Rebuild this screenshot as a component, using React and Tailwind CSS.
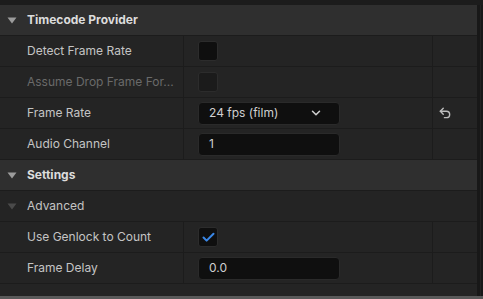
import { Undo2, ChevronDown, Check } from "lucide-react";

function Caret({ dim }) {
  return (
    <svg width="10" height="7" viewBox="0 0 10 7" className="shrink-0">
      <path d="M0.5 0.5 H9.5 L5 6.5 Z" fill={dim ? "#4a4a4a" : "#9c9c9c"} />
    </svg>
  );
}

function Header({ title }) {
  return (
    <div className="h-[31px] flex items-center gap-[10px] pl-[7px] bg-[#2f2f2f] border-b border-[#1c1c1c]">
      <Caret />
      <span className="font-bold text-[#dcdcdc]">{title}</span>
    </div>
  );
}

function Row({ label, dim, children, reset }) {
  return (
    <div className="h-[31px] flex bg-[#242424] border-b border-[#1c1c1c]">
      <div className={`w-[184px] shrink-0 flex items-center pl-[27px] border-r border-[#1c1c1c] ${dim ? "text-[#6a6a6a]" : "text-[#c4c4c4]"}`}>
        {label}
      </div>
      <div className="w-[249px] shrink-0 flex items-center pl-[14px] border-r border-[#1c1c1c]">
        {children}
      </div>
      <div className="flex-1 flex items-center pl-[5px]">
        {reset && <Undo2 size={14} strokeWidth={2.4} color="#bdbdbd" />}
      </div>
    </div>
  );
}

function Box({ dim, checked }) {
  return (
    <div className={`w-[20px] h-[20px] rounded-[3px] border border-[#2c2c2c] flex items-center justify-center ${dim ? "bg-[#1b1b1b]" : "bg-[#0f0f0f]"}`}>
      {checked && <Check size={15} strokeWidth={3.2} color="#3a87e6" />}
    </div>
  );
}

function Field({ value, dropdown }) {
  return (
    <div className="w-[142px] h-[23px] rounded-[4px] bg-[#0f0f0f] border border-[#2a2a2a] flex items-center pl-[10px] pr-[16px] justify-between text-[#d0d0d0]">
      <span>{value}</span>
      {dropdown && <ChevronDown size={14} strokeWidth={2.6} color="#cfcfcf" />}
    </div>
  );
}

export default function App() {
  return (
    <div className="w-[483px] h-[299px] bg-[#1a1a1a] overflow-hidden text-[12px] leading-none" style={{ fontFamily: "Inter, 'Noto Sans', sans-serif" }}>
      <div className="h-[5px] bg-[#1c1c1c]" />
      <div className="flex h-[291px]">
        <div className="w-[477px] flex flex-col">
          <Header title="Timecode Provider" />
          <Row label="Detect Frame Rate"><Box /></Row>
          <Row label="Assume Drop Frame For..." dim><Box dim /></Row>
          <Row label="Frame Rate" reset><Field value="24 fps (film)" dropdown /></Row>
          <Row label="Audio Channel"><Field value="1" /></Row>
          <Header title="Settings" />
          <div className="h-[31px] flex items-center gap-[10px] pl-[7px] bg-[#242424] border-b border-[#1c1c1c]">
            <Caret dim />
            <span className="text-[#c4c4c4]">Advanced</span>
          </div>
          <Row label="Use Genlock to Count"><Box checked /></Row>
          <Row label="Frame Delay"><Field value="0.0" /></Row>
          <div className="flex-1 bg-[#242424]" />
        </div>
        <div className="flex-1 bg-[#181818] flex justify-center">
          <div className="w-[1px] bg-[#222]" />
        </div>
      </div>
      <div className="h-[3px] bg-[#5a5a5a]" />
    </div>
  );
}
